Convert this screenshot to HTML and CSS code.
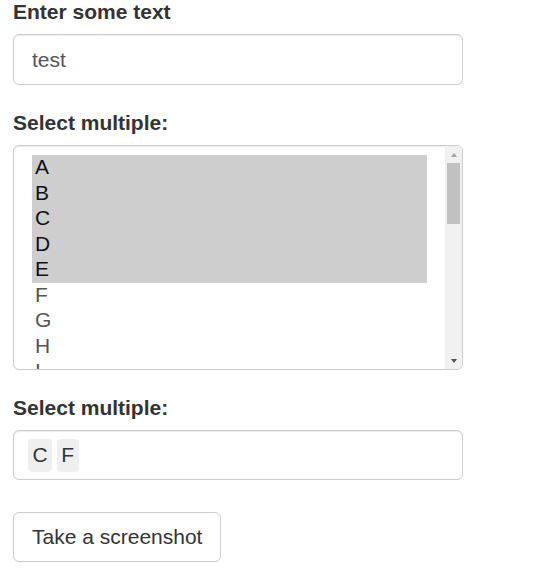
FILE: index.html
```html
<!DOCTYPE html>
<html lang="en">
<head>
<meta charset="utf-8">
<title>Inputs</title>
<link rel="stylesheet" href="styles.css">
</head>
<body>
<div class="page">
  <div class="form-group">
    <label class="control-label" for="txt">Enter some text</label>
    <input id="txt" class="form-control" type="text" value="test">
  </div>

  <div class="form-group">
    <label class="control-label">Select multiple:</label>
    <div class="listbox" role="listbox" aria-multiselectable="true">
      <div class="options">
        <div class="option selected">A</div>
        <div class="option selected">B</div>
        <div class="option selected">C</div>
        <div class="option selected">D</div>
        <div class="option selected">E</div>
        <div class="option">F</div>
        <div class="option">G</div>
        <div class="option">H</div>
        <div class="option">I</div>
      </div>
      <div class="scrollbar">
        <div class="sb-btn"><span class="arrow-up"></span></div>
        <div class="sb-track"><div class="sb-thumb"></div></div>
        <div class="sb-btn"><span class="arrow-down"></span></div>
      </div>
    </div>
  </div>

  <div class="form-group form-group-last">
    <label class="control-label">Select multiple:</label>
    <div class="selectize-input">
      <span class="item">C</span>
      <span class="item">F</span>
    </div>
  </div>

  <button class="btn" type="button">Take a screenshot</button>
</div>
</body>
</html>
```

FILE: styles.css
```css
html, body {
  margin: 0;
  padding: 0;
  background: #fff;
}

body {
  font-family: "Liberation Sans", Arial, Helvetica, sans-serif;
  font-size: 21px;
  color: #333;
}

.page {
  margin-top: -3.5px;
  padding-left: 13px;
}

.form-group {
  margin-bottom: 22.5px;
}

.form-group-last {
  margin-bottom: 31.5px;
}

.control-label {
  display: block;
  font-weight: 700;
  line-height: 30px;
  margin-bottom: 7.5px;
}

.form-control {
  display: block;
  box-sizing: border-box;
  width: 450px;
  height: 51px;
  margin: 0;
  padding: 9px 18px;
  font-family: inherit;
  font-size: 21px;
  line-height: 30px;
  color: #555;
  background: #fff;
  border: 1px solid #ccc;
  border-radius: 6px;
  box-shadow: inset 0 1px 1px rgba(0, 0, 0, 0.075);
  outline: none;
}

.listbox {
  box-sizing: border-box;
  width: 450px;
  height: 225px;
  display: flex;
  border: 1px solid #ccc;
  border-radius: 6px;
  overflow: hidden;
  background: #fff;
  box-shadow: inset 0 1px 1px rgba(0, 0, 0, 0.075);
}

.options {
  flex: 1;
  overflow: hidden;
  padding: 9px 18px 0 18px;
}

.option {
  height: 25.5px;
  box-sizing: border-box;
  padding: 0 3px 1px;
  line-height: 24.5px;
  color: #555;
}

.option.selected {
  background: #cecece;
  color: #111;
}

.scrollbar {
  width: 17px;
  flex: none;
  display: flex;
  flex-direction: column;
  background: #f1f1f1;
}

.sb-btn {
  height: 17px;
  display: flex;
  align-items: center;
  justify-content: center;
  flex: none;
  padding-left: 1px;
}

.sb-track {
  flex: 1;
  padding: 0 2px 0 2px;
}

.sb-thumb {
  height: 61px;
  background: #c1c1c1;
}

.arrow-up {
  width: 0;
  height: 0;
  border-left: 3.5px solid transparent;
  border-right: 3.5px solid transparent;
  border-bottom: 4px solid #a3a3a3;
}

.arrow-down {
  width: 0;
  height: 0;
  border-left: 3.5px solid transparent;
  border-right: 3.5px solid transparent;
  border-top: 4px solid #505050;
}

.selectize-input {
  box-sizing: border-box;
  width: 450px;
  height: 50px;
  display: flex;
  align-items: flex-start;
  gap: 4.5px;
  padding: 8px 14px;
  border: 1px solid #ccc;
  border-radius: 6px;
  background: #fff;
  box-shadow: inset 0 1px 1px rgba(0, 0, 0, 0.075);
}

.item {
  display: block;
  height: 33px;
  box-sizing: border-box;
  padding: 0 4.5px 2px;
  line-height: 31px;
  background: #efefef;
  border-radius: 4px;
  color: #333;
}

.btn {
  display: inline-block;
  box-sizing: border-box;
  height: 50px;
  margin: 0;
  padding: 9px 18px;
  font-family: inherit;
  font-size: 21px;
  line-height: 30px;
  color: #333;
  background: #fff;
  border: 1px solid #ccc;
  border-radius: 6px;
  cursor: pointer;
}
```
